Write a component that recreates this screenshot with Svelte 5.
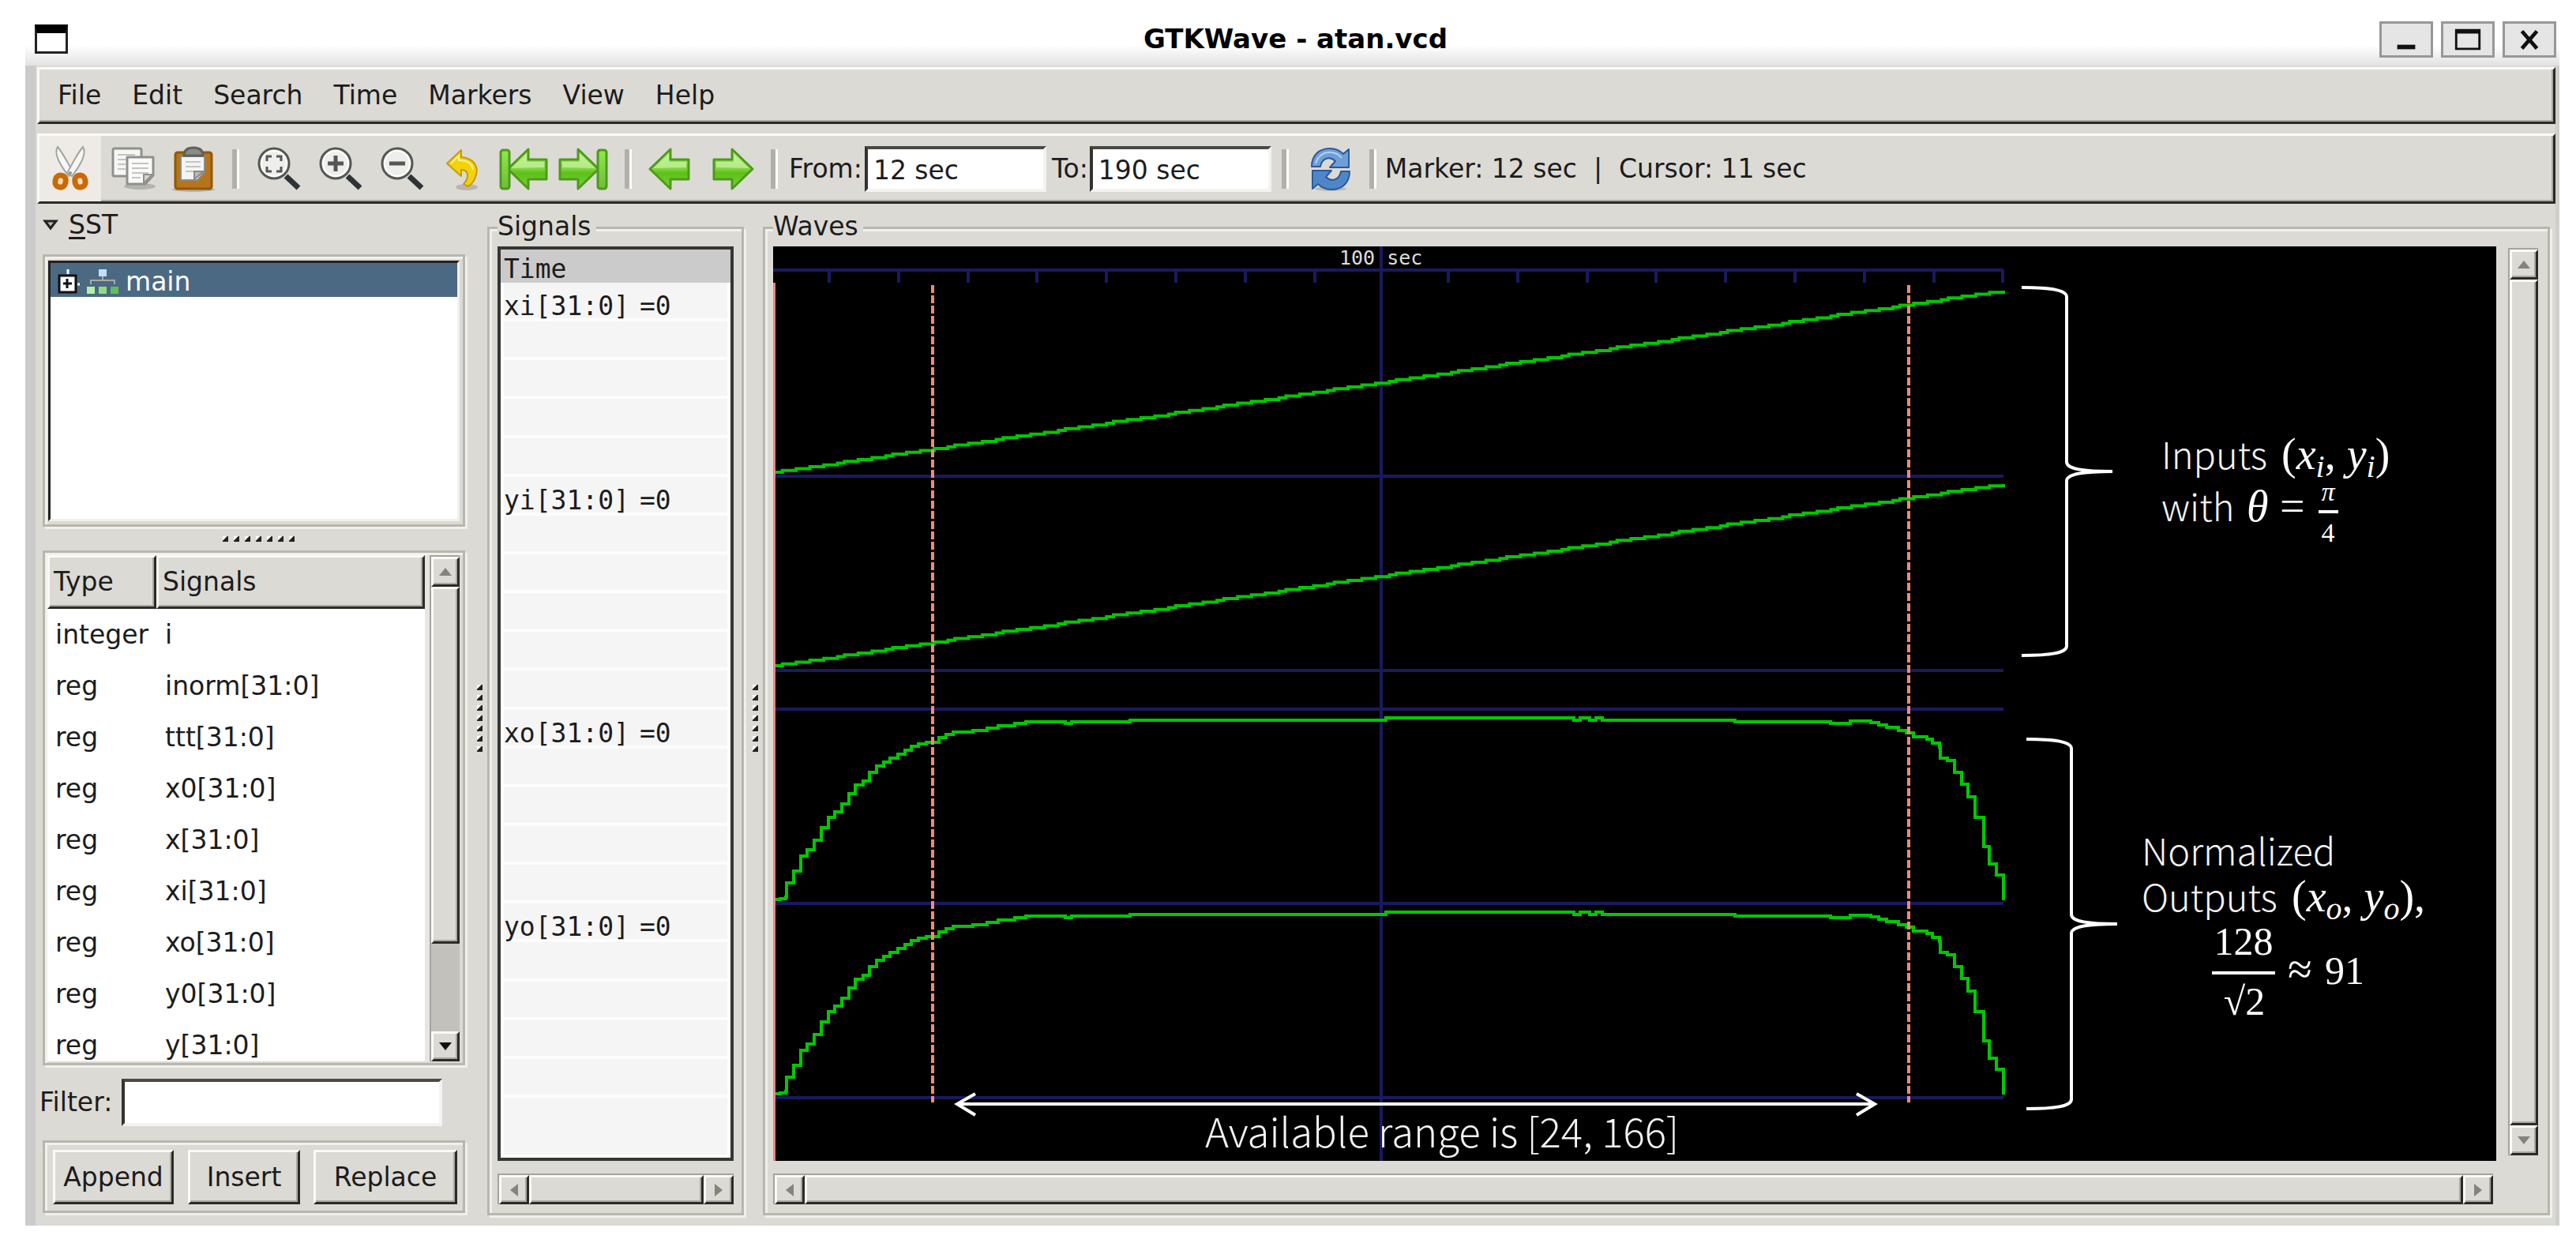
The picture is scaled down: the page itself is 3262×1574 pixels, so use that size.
<script>
  const menus = ['File', 'Edit', 'Search', 'Time', 'Markers', 'View', 'Help'];
  const tools = [
    { id: 'cut', label: 'Cut', active: true },
    { id: 'copy', label: 'Copy' },
    { id: 'paste', label: 'Paste' },
    null,
    { id: 'fit', label: 'Zoom fit' },
    { id: 'zoomin', label: 'Zoom in' },
    { id: 'zoomout', label: 'Zoom out' },
    { id: 'undo', label: 'Zoom undo' },
    { id: 'first', label: 'Zoom to start' },
    { id: 'last', label: 'Zoom to end' },
    null,
    { id: 'prev', label: 'Previous edge' },
    { id: 'next', label: 'Next edge' },
    null
  ];
  const facs = [
    ['integer', 'i'],
    ['reg', 'inorm[31:0]'],
    ['reg', 'ttt[31:0]'],
    ['reg', 'x0[31:0]'],
    ['reg', 'x[31:0]'],
    ['reg', 'xi[31:0]'],
    ['reg', 'xo[31:0]'],
    ['reg', 'y0[31:0]'],
    ['reg', 'y[31:0]']
  ];
  const traceNames = { 0: 'xi[31:0]', 5: 'yi[31:0]', 11: 'xo[31:0]', 16: 'yo[31:0]' };
  const traceRows = Array.from({ length: 21 }, (_, i) => traceNames[i] ?? '');
  const dots = Array.from({ length: 7 });

  let from = $state('12 sec');
  let to = $state('190 sec');
  let filter = $state('');

  // Wave canvas
  const ticks = [
    ...Array.from({ length: 8 }, (_, k) => Math.round(71 + k * 87.8)),
    ...Array.from({ length: 9 }, (_, k) => Math.round(855 + k * 87.8))
  ];
  const gridRows = [291, 537, 586, 832, 1078];

  function ramp(y0, y1) {
    const n = 178;
    const unit = 2.3;
    let d = `M3 ${y0}`;
    for (let i = 1; i <= n; i++) {
      const x = 3 + (1555 * i) / n;
      const y = y0 + Math.round(((y1 - y0) * i) / n / unit) * unit;
      d += `H${x.toFixed(1)}V${y.toFixed(1)}`;
    }
    return d;
  }

  // Each pair: the level moves to y at time position x
  const curve = [
    [9, 826], [16, 824], [17, 806], [26, 791], [35, 772], [43, 764], [52, 752], [61, 736], [70, 723],
    [78, 716], [87, 706], [96, 693], [104, 682], [114, 677], [122, 666], [131, 658], [140, 653], [148, 648],
    [158, 643], [167, 638], [175, 633], [184, 630], [194, 628], [210, 622], [219, 618], [228, 615],
    [253, 613], [271, 610], [285, 607], [306, 604], [320, 602], [370, 604], [378, 602], [452, 600],
    [776, 597], [1014, 600], [1022, 597], [1034, 600], [1042, 597], [1050, 600], [1218, 602],
    [1339, 604], [1364, 601], [1390, 603], [1400, 606], [1410, 609], [1425, 613], [1435, 616],
    [1444, 621], [1461, 624], [1468, 629], [1477, 634], [1478, 648], [1487, 651], [1496, 666],
    [1505, 681], [1513, 697], [1522, 723], [1533, 760], [1540, 782], [1549, 796], [1558, 828]
  ];
  function steps(shift) {
    let d = `M3 ${827 + shift}`;
    for (const [x, y] of curve) d += `H${x}V${y + shift}`;
    return d;
  }
  const traces = [ramp(286, 56), ramp(531, 301), steps(0), steps(246)];

  function brace(x, top, bottom) {
    const mid = (top + bottom) / 2;
    return `M${x} ${top}C${x + 36} ${top} ${x + 57} ${top + 3} ${x + 57} ${top + 12}V${mid - 12}C${x + 57} ${mid - 3} ${x + 78} ${mid} ${x + 115} ${mid}C${x + 78} ${mid} ${x + 57} ${mid + 3} ${x + 57} ${mid + 12}V${bottom - 12}C${x + 57} ${bottom - 3} ${x + 36} ${bottom} ${x} ${bottom}`;
  }
</script>

{#snippet arrowIcon(dir)}
  <polygon
    points={dir === 'l' ? '2,29 28,4 28,17 51,17 51,42 28,42 28,54' : '54,29 28,4 28,17 5,17 5,42 28,42 28,54'}
    fill="url(#green)" stroke="#4e9a1a" stroke-width="3" stroke-linejoin="round" />
  <polygon
    points={dir === 'l' ? '6,28 26,10 26,20 48,20 48,27' : '50,28 30,10 30,20 8,20 8,27'}
    fill="#d6f8b4" opacity="0.6" />
{/snippet}

{#snippet lens()}
  <line x1="38" y1="38" x2="54" y2="53" stroke="#2e3436" stroke-width="7" />
  <circle cx="23" cy="22" r="19" fill="#eeeeec" stroke="#555753" stroke-width="3" />
  <circle cx="23" cy="22" r="16" fill="none" stroke="#fff" stroke-width="2" />
{/snippet}

{#snippet icon(id)}
  <svg class="icon" viewBox="0 0 56 58" aria-hidden="true">
    {#if id === 'cut'}
      <path d="M12 1C7 9 15 24 26 38L32 34C27 26 21 12 12 1Z" fill="#f6f6f4" stroke="#a3a5a0" stroke-width="2" />
      <path d="M44 1C49 9 41 24 30 38L24 34C29 26 35 12 44 1Z" fill="#f6f6f4" stroke="#a3a5a0" stroke-width="2" />
      <rect x="9" y="37" width="13" height="15" rx="6" fill="#f1dcc0" stroke="#c96a07" stroke-width="7" transform="rotate(10 15 45)" />
      <rect x="34" y="37" width="13" height="15" rx="6" fill="#f1dcc0" stroke="#c96a07" stroke-width="7" transform="rotate(-10 41 45)" />
      <circle cx="28" cy="34" r="2" fill="#8f918c" />
    {:else if id === 'copy'}
      <ellipse cx="38" cy="51" rx="20" ry="4" fill="#b5b3ae" />
      <rect x="4" y="3" width="36" height="35" rx="2" fill="#f6f6f5" stroke="#8f918c" stroke-width="3" />
      <path d="M10 11H32M10 17H32M10 23H20M10 29H20" stroke="#c4c4c2" stroke-width="2" />
      <path d="M22 14H55V37L45 48H22Z" fill="#fafafa" stroke="#8f918c" stroke-width="3" stroke-linejoin="round" />
      <path d="M28 22H49M28 28H49M28 34H49M28 40H39" stroke="#c4c4c2" stroke-width="2" />
      <path d="M43 47V36H54Z" fill="#d3d3d1" stroke="#8f918c" stroke-width="2" />
    {:else if id === 'paste'}
      <ellipse cx="28" cy="55" rx="27" ry="3" fill="#b5b3ae" />
      <rect x="5" y="8" width="46" height="46" rx="3" fill="#b8741a" stroke="#8f5902" stroke-width="3" />
      <path d="M12 13H42V33L33 43H12Z" fill="#f4f4f4" stroke="#8b8d88" stroke-width="2" />
      <path d="M18 20H37M18 26H37M18 32H30" stroke="#c4c4c2" stroke-width="2" />
      <path d="M29 42V32H41Z" fill="#babdb6" stroke="#888a85" stroke-width="2" />
      <path d="M16 12C16 5 20 2 28 2S40 5 40 12Z" fill="#8b8d84" stroke="#5f615c" stroke-width="3" />
    {:else if id === 'fit'}
      {@render lens()}
      <path d="M14 19V13H20M26 13H32V19M32 26V32H26M20 32H14V26" fill="none" stroke="#555753" stroke-width="3" />
    {:else if id === 'zoomin'}
      {@render lens()}
      <path d="M23 12V32M13 22H33" stroke="#555753" stroke-width="5" />
    {:else if id === 'zoomout'}
      {@render lens()}
      <path d="M13 22H33" stroke="#555753" stroke-width="5" />
    {:else if id === 'undo'}
      <ellipse cx="33" cy="52" rx="14" ry="4" fill="#b9b6b0" />
      <path d="M8 22L26 5V14C42 15 48 26 45 36C43 44 39 49 34 51L29 48C33 44 34 40 34 37C34 32 31 30 26 30V38Z" fill="#f2d10f" stroke="#c99a06" stroke-width="2" stroke-linejoin="round" />
      <path d="M13 22L23 12V18C34 18 40 22 41 30" fill="none" stroke="#fbf08a" stroke-width="2" />
    {:else if id === 'first'}
      <g transform="translate(5 0)">{@render arrowIcon('l')}</g>
      <rect x="-2" y="5" width="11" height="49" rx="3" fill="url(#bar)" stroke="#4e9a1a" stroke-width="3" />
    {:else if id === 'last'}
      <g transform="translate(-10 0)">{@render arrowIcon('r')}</g>
      <rect x="43" y="5" width="11" height="49" rx="3" fill="url(#bar)" stroke="#4e9a1a" stroke-width="3" />
    {:else if id === 'prev'}
      {@render arrowIcon('l')}
    {:else if id === 'next'}
      {@render arrowIcon('r')}
    {:else if id === 'reload'}
      <ellipse cx="28" cy="54" rx="20" ry="3" fill="#bdbab4" />
      <path d="M4 26C4 12 13 3 27 3C35 3 40 6 44 10L51 4V27H27L34 19C27 12 17 15 15 26Z" fill="#6f9fd8" stroke="#2a5a9c" stroke-width="2" stroke-linejoin="round" />
      <path d="M52 32C52 46 43 55 29 55C21 55 16 52 12 48L5 54V31H29L22 39C29 46 39 43 41 32Z" fill="#4f86c8" stroke="#2a5a9c" stroke-width="2" stroke-linejoin="round" />
      <path d="M9 22C12 12 20 7 28 8C34 8 38 10 42 15" fill="none" stroke="#b7d0ef" stroke-width="2" />
    {/if}
  </svg>
{/snippet}

{#snippet stepper(dir, label, on = false)}
  <button type="button" class="stepper raised {dir}" class:on aria-label={label}>
    <svg viewBox="0 0 20 20" aria-hidden="true">
      {#if dir === 'up'}<polygon points="10,5 18,15 2,15" />
      {:else if dir === 'down'}<polygon points="10,15 18,5 2,5" />
      {:else if dir === 'left'}<polygon points="5,10 15,2 15,18" />
      {:else}<polygon points="15,10 5,2 5,18" />{/if}
    </svg>
  </button>
{/snippet}

{#snippet grip()}
  {#each dots as _}<i></i>{/each}
{/snippet}

<svg class="defs" aria-hidden="true">
  <defs>
    <linearGradient id="green" x1="0" y1="0" x2="0" y2="1">
      <stop offset="0" stop-color="#b4ee7c" />
      <stop offset="0.5" stop-color="#7fd441" />
      <stop offset="0.6" stop-color="#5cc016" />
      <stop offset="1" stop-color="#79d23c" />
    </linearGradient>
    <linearGradient id="bar" x1="0" y1="0" x2="0" y2="1">
      <stop offset="0" stop-color="#8ee84a" />
      <stop offset="1" stop-color="#6dbd3a" />
    </linearGradient>
  </defs>
</svg>

<div class="app">
  <header class="titlebar">
    <button type="button" class="sysmenu" aria-label="Window menu"></button>
    <h1>GTKWave - atan.vcd</h1>
    <div class="winbtns">
      <button type="button" aria-label="Minimize"><svg viewBox="0 0 40 40"><rect x="8" y="27" width="24" height="6" /></svg></button>
      <button type="button" aria-label="Maximize"><svg viewBox="0 0 40 40"><path d="M3 6H37V34H3ZM6 12V31H34V12Z" fill-rule="evenodd" /></svg></button>
      <button type="button" aria-label="Close"><svg viewBox="0 0 40 40"><path d="M10 9L30 32M30 9L10 32" stroke="#111" stroke-width="5" /></svg></button>
    </div>
  </header>

  <div class="window">
    <nav class="menubar raised" aria-label="Main menu">
      {#each menus as m}<button type="button">{m}</button>{/each}
    </nav>

    <div class="toolbar raised">
      {#each tools as t}
        {#if t}
          <button type="button" class="tool" class:active={t.active} aria-label={t.label}>{@render icon(t.id)}</button>
        {:else}
          <span class="sep"></span>
        {/if}
      {/each}
      <label for="from">From:</label>
      <input id="from" class="sunken" type="text" bind:value={from} />
      <label class="to" for="to">To:</label>
      <input id="to" class="sunken" type="text" bind:value={to} />
      <span class="sep wide"></span>
      <button type="button" class="tool" aria-label="Reload">{@render icon('reload')}</button>
      <span class="sep"></span>
      <span class="status">Marker: 12 sec&nbsp; |&nbsp; Cursor: 11 sec</span>
    </div>

    <main>
      <aside class="side">
        <h2 class="expander">
          <svg viewBox="0 0 20 14" aria-hidden="true"><path d="M3 2H17L10 11Z" fill="#bbb" stroke="#222" stroke-width="3" /></svg>
          <span><u>S</u>ST</span>
        </h2>
        <div class="etched tree">
          <div class="treebox">
            <div class="node">
              <svg class="plus" viewBox="0 0 28 32" aria-hidden="true">
                <path d="M13 0V6M25 19H28" stroke="#fff" stroke-width="3" />
                <rect x="2" y="8" width="21" height="21" fill="#fff" stroke="#111" stroke-width="3" />
                <path d="M7 18H18M12 12V24" stroke="#111" stroke-width="3" />
              </svg>
              <svg class="hier" viewBox="0 0 42 34" aria-hidden="true">
                <path d="M21 8V15M6 20V15H36V20" fill="none" stroke="#a9a9a4" stroke-width="2" />
                <rect x="16" y="1" width="10" height="9" fill="#c4dcfb" />
                <rect x="1" y="23" width="10" height="9" fill="#b4efa4" />
                <rect x="16" y="23" width="10" height="9" fill="#8fdc80" />
                <rect x="31" y="23" width="10" height="9" fill="#5fbf55" />
              </svg>
              <span>main</span>
            </div>
          </div>
        </div>
        <div class="grip across">{@render grip()}</div>
        <div class="etched list">
          <div class="tablewrap">
            <table>
              <thead><tr><th scope="col" class="raised">Type</th><th scope="col" class="raised">Signals</th></tr></thead>
              <tbody>
                {#each facs as [type, name]}<tr><td>{type}</td><td>{name}</td></tr>{/each}
              </tbody>
            </table>
          </div>
          <div class="vbar">
            {@render stepper('up', 'Scroll list up')}
            <div class="thumb raised part"></div>
            <div class="trough"></div>
            {@render stepper('down', 'Scroll list down', true)}
          </div>
        </div>
        <div class="filter">
          <label for="filter">Filter:</label>
          <input id="filter" class="sunken" type="text" bind:value={filter} />
        </div>
        <div class="etched actions">
          <button type="button" class="raised append">Append</button>
          <button type="button" class="raised insert">Insert</button>
          <button type="button" class="raised replace">Replace</button>
        </div>
      </aside>

      <div class="grip down">{@render grip()}</div>

      <section class="etched panel signals">
        <h2>Signals</h2>
        <div class="names">
          <div class="time">Time</div>
          <div class="rows">
            {#each traceRows as n}
              <div class="row">{#if n}<span>{n}</span><span>=0</span>{/if}</div>
            {/each}
          </div>
        </div>
        <div class="hbar">
          {@render stepper('left', 'Scroll names left')}
          <div class="thumb raised"></div>
          {@render stepper('right', 'Scroll names right')}
        </div>
      </section>

      <div class="grip down narrow">{@render grip()}</div>

      <section class="etched panel waves">
        <h2>Waves</h2>
        <div class="wavegrid">
          <div class="canvas">
            <svg role="img" aria-label="Waveforms of xi, yi, xo and yo">
              <g class="grid">
                <path d="M0 30H1558" />
                {#each ticks as x}<path d="M{x} 30V46" />{/each}
                {#each gridRows as y}<path d="M2 {y}H1558" />{/each}
                <path d="M770 0V1160" />
              </g>
              <text class="ruler" x="717" y="23">100 sec</text>
              {#each traces as d}<path class="trace" {d} />{/each}
              <path class="marker" d="M1 46V1160" />
              <path class="cursor" d="M202 49V1084M1438 49V1084" />
              <g class="note">
                <path d={brace(1581, 52, 518)} />
                <path d={brace(1587, 624, 1092)} />
                <path d="M234 1086H1394M256 1073L233 1086L256 1100M1372 1073L1395 1086L1372 1100" />
              </g>
              <g class="label">
                <text class="big" x="547" y="1141">Available range is [24, 166]</text>
                <text x="1758" y="282">Inputs</text>
                <text x="1758" y="348">with</text>
                <text x="1733" y="784">Normalized</text>
                <text x="1733" y="842">Outputs</text>
              </g>
              <g class="math">
                <text class="vars" x="1910" y="282">(<tspan class="it">x</tspan><tspan class="sub" dy="10">i</tspan><tspan dy="-10">,</tspan> <tspan class="it">y</tspan><tspan class="sub" dy="10">i</tspan><tspan dy="-10">)</tspan></text>
                <text class="vars it" x="1866" y="348">θ</text>
                <text class="vars" x="1908" y="348">=</text>
                <text class="small it" x="1969" y="322" text-anchor="middle">π</text>
                <text class="small" x="1969" y="374" text-anchor="middle">4</text>
                <path d="M1957 336H1982" />
                <text class="vars" x="1923" y="842">(<tspan class="it">x</tspan><tspan class="sub" dy="10">o</tspan><tspan dy="-10">,</tspan> <tspan class="it">y</tspan><tspan class="sub" dy="10">o</tspan><tspan dy="-10">),</tspan></text>
                <text x="1862" y="897" text-anchor="middle">128</text>
                <path d="M1822 920H1902" />
                <text x="1863" y="973" text-anchor="middle">√2</text>
                <text class="vars" x="1918" y="934">≈</text>
                <text x="1965" y="934">91</text>
              </g>
            </svg>
          </div>
          <div class="vbar">
            {@render stepper('up', 'Scroll waves up')}
            <div class="thumb raised"></div>
            {@render stepper('down', 'Scroll waves down')}
          </div>
          <div class="hbar">
            {@render stepper('left', 'Scroll waves left')}
            <div class="thumb raised"></div>
            {@render stepper('right', 'Scroll waves right')}
          </div>
        </div>
      </section>
    </main>
  </div>
</div>

<style>
  :global(body) { background: #fff; }
  * { box-sizing: border-box; }
  .defs { position: absolute; width: 0; height: 0; }
  .app {
    min-height: 100vh;
    padding: 0 21px 22px 32px;
    display: flex;
    flex-direction: column;
    font: 33px/40px "DejaVu Sans", sans-serif;
    color: #1c1c1c;
  }
  button, input { font: inherit; color: inherit; }
  button { border: 0; background: none; padding: 0; margin: 0; }
  h1, h2 { margin: 0; font: inherit; }

  .raised {
    background: #dcdad5;
    border: 3px solid;
    border-color: #fbfaf8 #2b2b26 #2b2b26 #fbfaf8;
    box-shadow: inset -2px -2px 0 #aaa8a1;
  }
  .sunken {
    background: #fff;
    border: 4px solid;
    border-color: #4a4944 #f4f3f0 #f4f3f0 #33322e;
    border-radius: 0;
    outline: 0;
  }
  .etched {
    border: 3px solid #b9b6ad;
    box-shadow: 3px 3px 0 #f1f0ed, inset 3px 3px 0 #f1f0ed;
  }

  .titlebar {
    height: 83px;
    display: grid;
    grid-template-columns: 1fr auto 1fr;
    align-items: center;
    padding: 16px 4px 0 12px;
    background: linear-gradient(#fff 57px, #e2e2e2);
  }
  .titlebar h1 { font-weight: bold; font-size: 34px; color: #000; line-height: 40px; padding-bottom: 2px; }
  .sysmenu { width: 42px; height: 37px; border: 3px solid #222; border-top: 11px solid #000; background: #fff; }
  .winbtns { display: flex; gap: 10px; justify-content: flex-end; }
  .winbtns button {
    width: 68px;
    height: 46px;
    background: #e5e5e5;
    border: 3px solid #979797;
    display: flex;
    align-items: center;
    justify-content: center;
  }
  .winbtns svg { width: 38px; height: 38px; fill: #111; }

  .window {
    flex: 1;
    display: flex;
    flex-direction: column;
    background: #dcdad5;
    border-left: 13px solid #cbcbcb;
    border-right: 5px solid #cfcfcb;
  }
  .menubar { margin: 2px 0 12px 2px; height: 72px; display: flex; align-items: center; gap: 39px; padding-left: 23px; }
  .toolbar { margin-left: 2px; height: 89px; display: flex; align-items: center; }
  .tool { width: 78px; align-self: stretch; display: flex; align-items: center; justify-content: center; }
  .tool.active { background: #eeebe7; }
  .icon { width: 56px; height: 58px; overflow: visible; }
  .sep { width: 29px; height: 50px; display: flex; justify-content: center; }
  .sep::before { content: ""; width: 6px; background: #b3b0a9; border-right: 3px solid #fff; }
  .sep.wide { width: 36px; }
  .toolbar label { margin: 0 3px 0 4px; }
  .toolbar .to { margin-left: 7px; margin-right: 2px; }
  .toolbar input { width: 230px; height: 58px; padding: 4px 7px 0; }
  .status { padding-left: 1px; }

  main { flex: 1; display: flex; padding: 7px 7px 13px 9px; }
  .side { width: 535px; display: flex; flex-direction: column; }
  .expander { display: flex; align-items: center; gap: 13px; margin-bottom: 17px; }
  .expander svg { width: 20px; height: 14px; }
  u { text-decoration-thickness: 3px; text-underline-offset: 4px; }
  .tree { height: 345px; padding: 5px 4px 4px; }
  .treebox {
    height: 100%;
    background: #fff;
    border: 3px solid;
    border-color: #222 #f1f0ed #f1f0ed #222;
  }
  .node { height: 43px; background: #4b6983; color: #fff; display: flex; align-items: center; padding: 5px 0 0 9px; }
  .plus { width: 28px; height: 32px; }
  .hier { width: 42px; height: 34px; margin: 0 8px; }

  .grip { display: flex; align-items: center; justify-content: center; gap: 6px; }
  .grip i { width: 7px; height: 7px; background: linear-gradient(135deg, #fff 35%, #222 45%); }
  .across { height: 30px; padding-left: 12px; gap: 7px; }
  .down { width: 28px; flex-direction: column; padding: 14px 0 0 8px; }
  .narrow { width: 24px; padding-left: 4px; }

  .list { display: flex; justify-content: space-between; padding: 3px 4px 2px 3px; }
  .tablewrap { flex: 1; height: 641px; overflow: hidden; background: #fff; border-right: 6px solid #e8e6e2; }
  table { width: 100%; border-collapse: separate; border-spacing: 0; }
  th { height: 68px; padding: 0 0 0 5px; font-weight: normal; text-align: left; }
  th:first-child { width: 138px; }
  td { height: 65px; padding: 0 0 0 10px; line-height: 38px; }
  td + td { padding-left: 11px; }
  .vbar { width: 38px; display: flex; flex-direction: column; border: 2px solid #a5a39c; border-right: 0; border-bottom: 0; }
  .hbar { height: 39px; display: flex; border: 2px solid #a5a39c; border-right: 0; border-bottom: 0; }
  .stepper { flex: none; display: flex; align-items: center; justify-content: center; }
  .stepper svg { width: 20px; height: 20px; fill: #85837d; }
  .stepper.on svg { fill: #111; }
  .up, .down.stepper { width: 100%; height: 38px; padding: 0; }
  .left, .right { height: 100%; width: 38px; }
  .thumb { flex: 1; }
  .vbar .part { flex: 4; }
  .trough { flex: 1; background: #c2c1bb; }

  .filter { display: flex; align-items: center; margin: 17px 0 18px -4px; }
  .filter label { width: 104px; }
  .filter input { width: 406px; height: 60px; }
  .actions { display: flex; padding: 9px 7px 8px 10px; }
  .actions button { height: 69px; }
  .append { width: 153px; }
  .insert { width: 142px; margin: 0 17px 0 18px; }
  .replace { flex: 1; }

  .panel { margin-top: 22px; display: flex; flex-direction: column; padding: 0 10px 11px; }
  .panel h2 { align-self: flex-start; margin: -23px 0 5px; padding-right: 6px; background: #dcdad5; }
  .signals { width: 325px; }
  .names {
    flex: 1;
    display: flex;
    flex-direction: column;
    border: 4px solid #363632;
    background: #fff;
    font-family: "DejaVu Sans Mono", monospace;
  }
  .names::after { content: ""; flex: 1; margin: 0 4px 4px; background: #f5f5f5; }
  .time { height: 42px; padding-left: 4px; background: #cbcbcb; line-height: 50px; }
  .rows { height: 1032px; display: grid; grid-auto-rows: 1fr; }
  .row {
    margin: 0 4px;
    background: #f5f5f5;
    border-bottom: 4px solid #fdfdfd;
    display: flex;
    gap: 13px;
    line-height: 60px;
    min-height: 0;
  }
  .panel .hbar { margin-top: 16px; }

  .waves { flex: 1; min-width: 0; padding-right: 12px; }
  .wavegrid { flex: 1; display: grid; grid-template-columns: minmax(0, 1fr) 38px; grid-template-rows: 1fr auto; column-gap: 15px; }
  .waves .vbar { margin: 2px 0 7px; }
  .waves .hbar { margin-right: 4px; }
  .canvas { display: flex; background: #000; }
  .canvas svg { flex: 1; height: auto; min-width: 0; }
  .grid path { stroke: #1a1a60; stroke-width: 4; fill: none; shape-rendering: crispEdges; }
  .trace { fill: none; stroke: #00c800; stroke-width: 4; }
  .marker { stroke: #f28080; stroke-width: 4; }
  .cursor { stroke: #f08a78; stroke-width: 4; stroke-dasharray: 10 3; }
  .note path { fill: none; stroke: #fff; stroke-width: 4; }
  .ruler { font: 25px "DejaVu Sans Mono", monospace; fill: #ddd; }
  .label { font: 300 47px "Noto Sans CJK JP", sans-serif; fill: #f4f4f4; }
  .big { font-size: 51px; }
  .math { font: 50px "Liberation Serif", serif; fill: #fff; }
  .math path { stroke: #fff; stroke-width: 4; }
  .vars { font-size: 56px; }
  .it { font-style: italic; }
  .sub { font-style: italic; font-size: 40px; }
  .small { font-size: 34px; }
</style>
